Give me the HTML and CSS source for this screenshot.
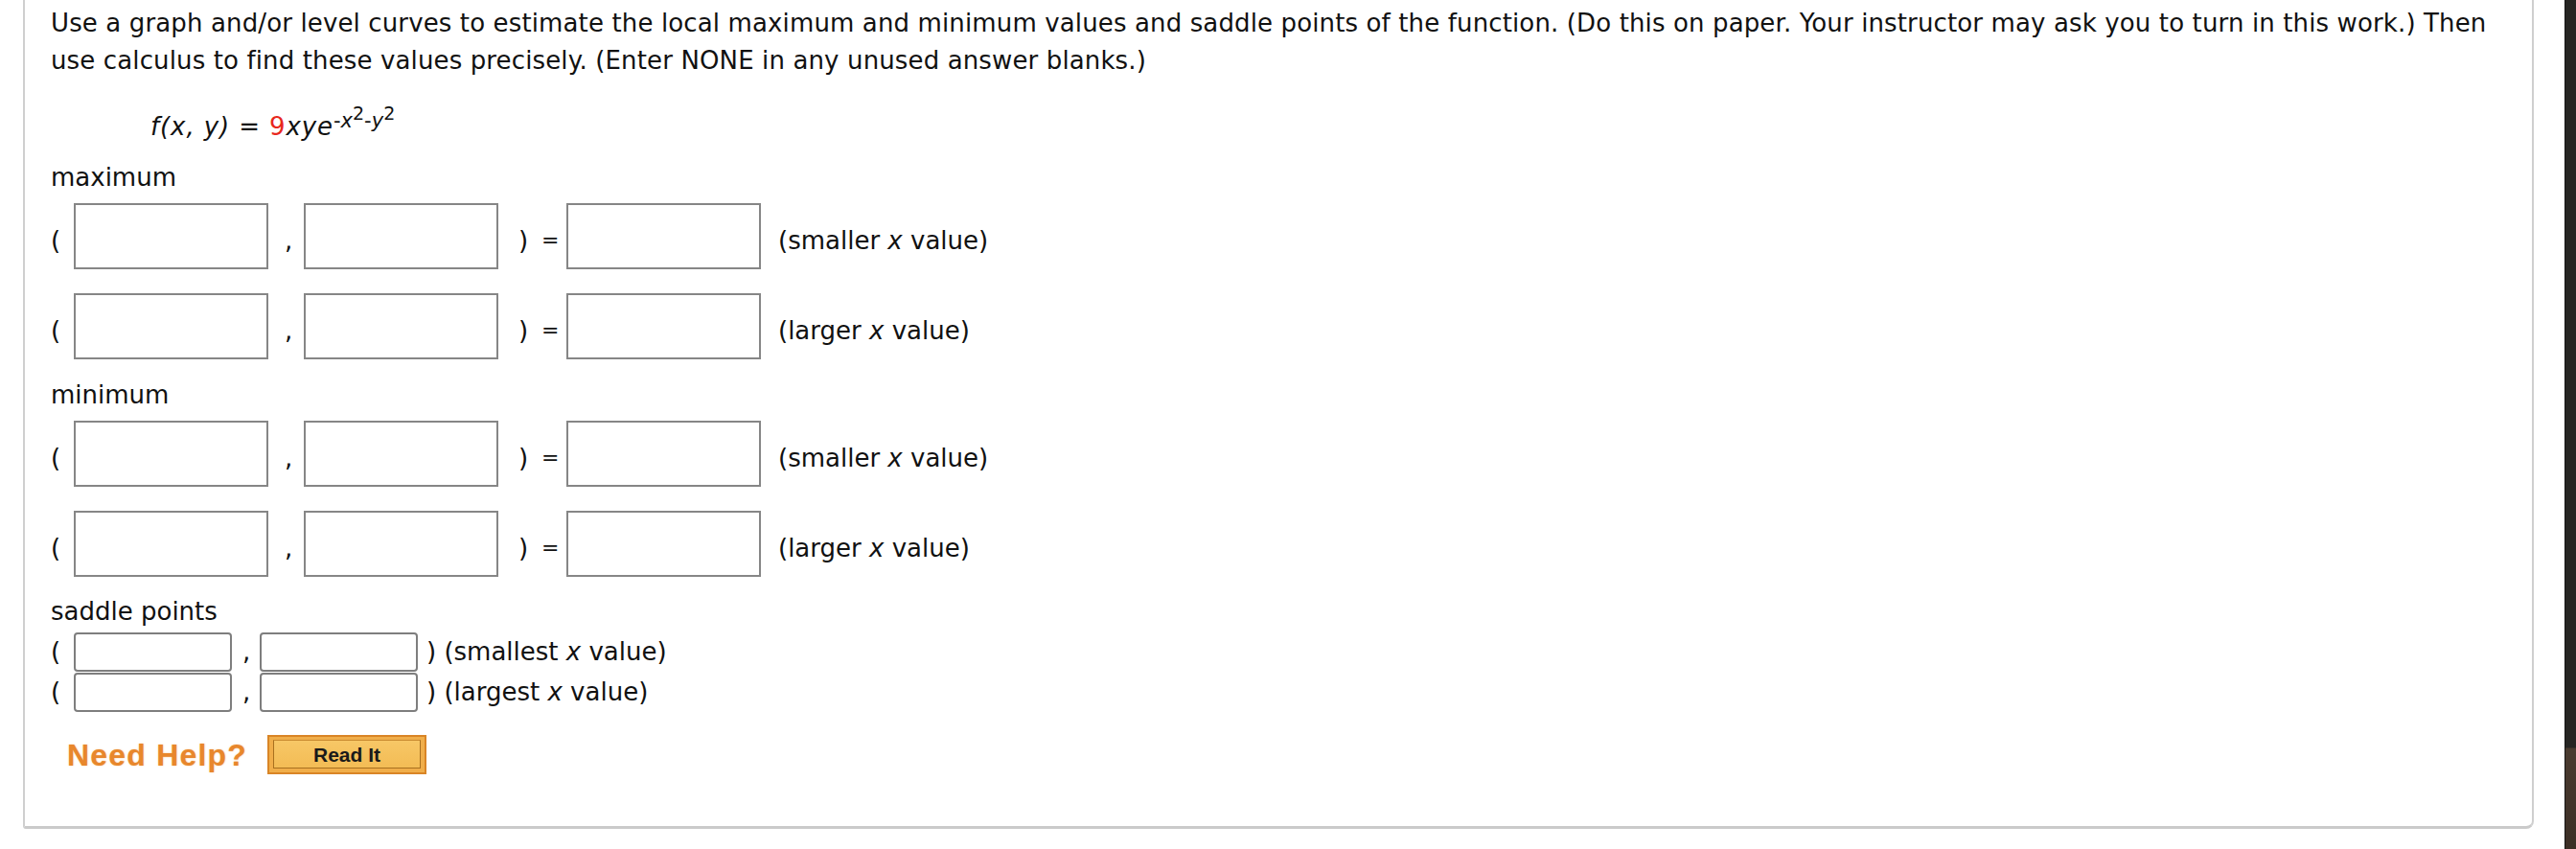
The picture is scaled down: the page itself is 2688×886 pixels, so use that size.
FILE: index.html
```html
<!DOCTYPE html>
<html lang="en">
<head>
<meta charset="utf-8">
<title>Local max/min and saddle points</title>
<link rel="stylesheet" href="styles.css">
</head>
<body>
<div class="page">
  <div class="card">
    <p class="question">Use a graph and/or level curves to estimate the local maximum and minimum values and saddle points of the function. (Do this on paper. Your instructor may ask you to turn in this work.) Then use calculus to find these values precisely. (Enter NONE in any unused answer blanks.)</p>
    <div class="func"><i>f(x, y)</i> = <span class="red">9</span><i>xye</i><sup class="exp">-<i>x</i><sup class="sq">2</sup>-<i>y</i><sup class="sq">2</sup></sup></div>

    <div class="label label-max">maximum</div>
    <div class="row">
      <span class="open">(</span><input class="box" type="text"><span class="comma">,</span><input class="box" type="text"><span class="close">)</span><span class="eq">=</span><input class="box" type="text"><span class="note">(smaller <i>x</i> value)</span>
    </div>
    <div class="row">
      <span class="open">(</span><input class="box" type="text"><span class="comma">,</span><input class="box" type="text"><span class="close">)</span><span class="eq">=</span><input class="box" type="text"><span class="note">(larger <i>x</i> value)</span>
    </div>

    <div class="label label-min">minimum</div>
    <div class="row">
      <span class="open">(</span><input class="box" type="text"><span class="comma">,</span><input class="box" type="text"><span class="close">)</span><span class="eq">=</span><input class="box" type="text"><span class="note">(smaller <i>x</i> value)</span>
    </div>
    <div class="row">
      <span class="open">(</span><input class="box" type="text"><span class="comma">,</span><input class="box" type="text"><span class="close">)</span><span class="eq">=</span><input class="box" type="text"><span class="note">(larger <i>x</i> value)</span>
    </div>

    <div class="label label-saddle">saddle points</div>
    <div class="srow">
      <span class="sopen">(</span><input class="sbox" type="text"><span class="scomma">,</span><input class="sbox" type="text"><span class="snote">) (smallest <i>x</i> value)</span>
    </div>
    <div class="srow">
      <span class="sopen">(</span><input class="sbox" type="text"><span class="scomma">,</span><input class="sbox" type="text"><span class="snote">) (largest <i>x</i> value)</span>
    </div>

    <div class="help">
      <span class="need">Need Help?</span>
      <span class="readit"><span class="readit-inner">Read It</span></span>
    </div>
  </div>
  <div class="side"></div>
</div>
</body>
</html>
```

FILE: styles.css
```css
html, body {
  margin: 0;
  padding: 0;
  background: #ffffff;
}

.page {
  display: flex;
  width: 2688px;
  height: 886px;
  overflow: hidden;
}

.card {
  margin-left: 24px;
  width: 2589px;
  height: 857px;
  border: 2px solid #cfcfcf;
  border-top: none;
  border-bottom: 3px solid #cacaca;
  border-radius: 0 0 8px 3px;
  padding: 5px 0 0 27px;
  font-family: "DejaVu Sans", Verdana, sans-serif;
  font-size: 26px;
  color: #111;
  flex: none;
}

.side {
  margin-left: auto;
  width: 11px;
  height: 886px;
  background: linear-gradient(to bottom, #262523 0, #262523 780px, #4a3b30 781px, #3b2e25 886px);
  border-left: 1px solid #161514;
}

.question {
  margin: 0;
  line-height: 39px;
  letter-spacing: 0.13px;
}

.func {
  margin: 30px 0 0 104px;
  line-height: 39px;
  height: 39px;
  letter-spacing: 0.9px;
}

.red {
  color: #e8281c;
}

.exp {
  font-size: 21px;
  vertical-align: 8px;
  line-height: 0;
  letter-spacing: 0;
}

.sq {
  font-size: 19px;
  vertical-align: 8px;
  line-height: 0;
}

.label {
  line-height: 39px;
}

.label-max {
  margin-top: 14px;
}

.label-min {
  margin-top: 18px;
}

.label-saddle {
  margin-top: 17px;
}

.row {
  display: flex;
  align-items: center;
  height: 69px;
  margin-top: 7px;
}

.row + .row {
  margin-top: 25px;
}

.open,
.comma,
.close,
.eq,
.note {
  padding-top: 8px;
  line-height: 30px;
}

.open {
  width: 24px;
  flex: none;
}

.box {
  box-sizing: border-box;
  width: 203px;
  height: 69px;
  border: 2px solid #868686;
  border-radius: 0;
  background: #fff;
  margin: 0;
  padding: 0;
  flex: none;
  font: inherit;
}

.comma {
  width: 37px;
  padding-left: 17px;
  box-sizing: border-box;
  flex: none;
}

.close {
  width: 42px;
  padding-left: 21px;
  box-sizing: border-box;
  flex: none;
}

.eq {
  width: 29px;
  box-sizing: border-box;
  padding-left: 3px;
  flex: none;
  font-size: 22px;
}

.note {
  margin-left: 18px;
}

.srow {
  display: flex;
  align-items: flex-start;
  height: 42px;
}

.label + .srow {
  margin-top: 2px;
}

.sopen,
.scomma,
.snote {
  padding-top: 5px;
  line-height: 30px;
}

.sopen {
  width: 24px;
  flex: none;
}

.sbox {
  box-sizing: border-box;
  width: 165px;
  height: 41px;
  border: 2px solid #7e7e7e;
  border-radius: 4px;
  background: #fff;
  margin: 0;
  padding: 0;
  flex: none;
}

.scomma {
  width: 29px;
  padding-left: 11px;
  box-sizing: border-box;
  flex: none;
}

.snote {
  margin-left: 9px;
}

.help {
  display: flex;
  align-items: center;
  margin-top: 22px;
  margin-left: 17px;
}

.need {
  font-family: "Liberation Sans", Arial, sans-serif;
  font-weight: bold;
  font-size: 32px;
  color: #e8872c;
  text-shadow: 0 0 2px #f6c896;
  letter-spacing: 1.2px;
  line-height: 40px;
  padding-top: 2px;
}

.readit {
  margin-left: 21px;
  box-sizing: border-box;
  width: 166px;
  height: 41px;
  border: 2px solid #d98526;
  background: #f0ae4a;
  padding: 3px 4px 4px 4px;
  display: flex;
}

.readit-inner {
  flex: 1;
  border: 1px solid #a8701f;
  border-top-color: #c98a30;
  background: linear-gradient(to bottom, #f7c766 0, #f3bc55 100%);
  font-family: "Liberation Sans", Arial, sans-serif;
  font-weight: bold;
  font-size: 21px;
  color: #1a1a1a;
  display: flex;
  align-items: center;
  justify-content: center;
  line-height: 1;
  padding-top: 2px;
}
```
